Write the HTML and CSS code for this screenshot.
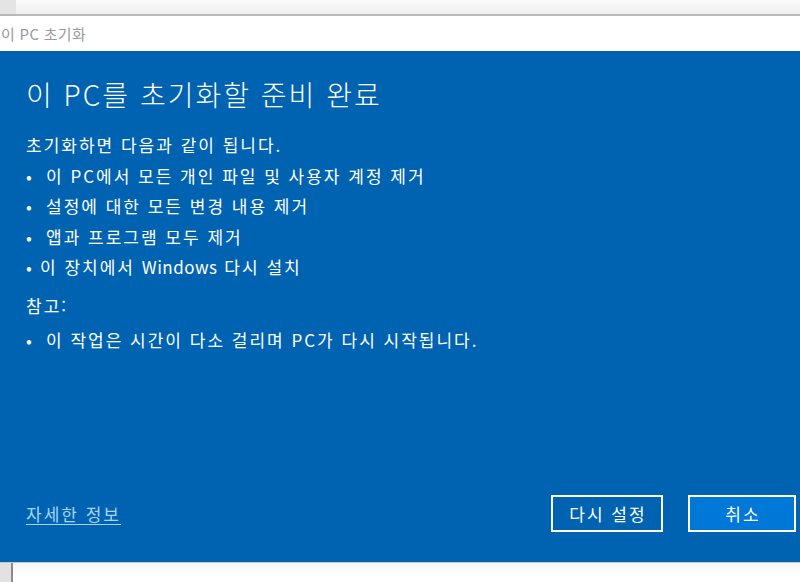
FILE: index.html
```html
<!DOCTYPE html>
<html lang="ko">
<head>
    <meta charset="UTF-8">
    <meta name="viewport" content="width=device-width, initial-scale=1.0">
    <title>이 PC 초기화</title>
    <link rel="stylesheet" href="styles.css">
</head>
<body>
    <div class="top-strip">
        <div class="top-strip-corner"></div>
    </div>
    <div class="title-bar">이 PC 초기화</div>
    <div class="dialog">
        <h1 class="dialog-title">이 PC를 초기화할 준비 완료</h1>
        <p class="dialog-text">초기화하면 다음과 같이 됩니다.</p>
        <ul class="dialog-list">
            <li><span class="dot">•</span><span class="item">이 PC에서 모든 개인 파일 및 사용자 계정 제거</span></li>
            <li><span class="dot">•</span><span class="item">설정에 대한 모든 변경 내용 제거</span></li>
            <li><span class="dot">•</span><span class="item">앱과 프로그램 모두 제거</span></li>
            <li><span class="dot">•</span><span class="item tight">이 장치에서 <span class="latin">Windows</span> 다시 설치</span></li>
        </ul>
        <p class="dialog-text note">참고:</p>
        <ul class="dialog-list">
            <li><span class="dot">•</span><span class="item">이 작업은 시간이 다소 걸리며 PC가 다시 시작됩니다.</span></li>
        </ul>
        <div class="dialog-footer">
            <a class="more-link" href="#">자세한 정보</a>
            <div class="buttons">
                <button class="dlg-btn">다시 설정</button>
                <button class="dlg-btn primary">취소</button>
            </div>
        </div>
    </div>
    <div class="bottom-strip">
        <div class="bottom-strip-side"></div>
    </div>
</body>
</html>
```

FILE: styles.css
```css
body {
    margin: 0;
    width: 800px;
    height: 582px;
    overflow: hidden;
    background-color: white;
    font-family: "Noto Sans CJK KR", "Noto Sans", sans-serif;
}
.top-strip {
    height: 14px;
    border-bottom: 2px solid #b9b9b9;
    background: linear-gradient(#fafafa, #efefef);
}
.top-strip-corner {
    width: 16px;
    height: 14px;
    background-color: #e4e4e4;
}
.title-bar {
    height: 35px;
    line-height: 35px;
    padding-left: 1px;
    color: #9a9a9a;
    font-size: 15px;
    letter-spacing: 0.3px;
    background-color: white;
}
.dialog {
    height: 511px;
    box-sizing: border-box;
    padding: 18px 4px 30px 26px;
    background-color: #0063b1;
    color: white;
    letter-spacing: 2px;
    display: flex;
    flex-direction: column;
}
.dialog-title {
    margin: 0 0 11px 0;
    font-size: 28px;
    font-weight: 300;
    line-height: 50px;
}
.dialog-text {
    margin: 0;
    font-size: 17px;
    line-height: 30.5px;
}
.dialog-text.note {
    margin-top: 7px;
    margin-bottom: 3px;
    line-height: 32px;
}
.dialog-list {
    list-style: none;
    margin: 0;
    padding: 0;
    font-size: 17px;
    line-height: 30.5px;
}
.dialog-list li {
    display: flex;
}
.dot {
    width: 20px;
    letter-spacing: 0;
}
.item.tight {
    margin-left: -6px;
}
.latin {
    letter-spacing: 0.5px;
}
.dialog-footer {
    margin-top: auto;
    display: flex;
    justify-content: space-between;
    align-items: center;
}
.more-link {
    color: #a9d4f5;
    font-size: 17px;
    text-decoration: underline;
    text-underline-offset: 3px;
}
.buttons {
    display: flex;
    gap: 25px;
}
.dlg-btn {
    width: 112px;
    height: 37px;
    border: 2px solid white;
    background-color: transparent;
    color: white;
    font-family: "Noto Sans CJK KR", "Noto Sans", sans-serif;
    font-size: 17px;
    letter-spacing: 2px;
    padding: 0 0 0 2px;
}
.dlg-btn.primary {
    width: 108px;
    background-color: #0078d7;
}
.bottom-strip {
    height: 20px;
    border-top: 1px solid #c8c8c8;
    background: linear-gradient(#f4f4f4, white 60%);
}
.bottom-strip-side {
    width: 11px;
    height: 20px;
    border-right: 2px solid #8a8a8a;
    background-color: #e2e2e2;
}
```
